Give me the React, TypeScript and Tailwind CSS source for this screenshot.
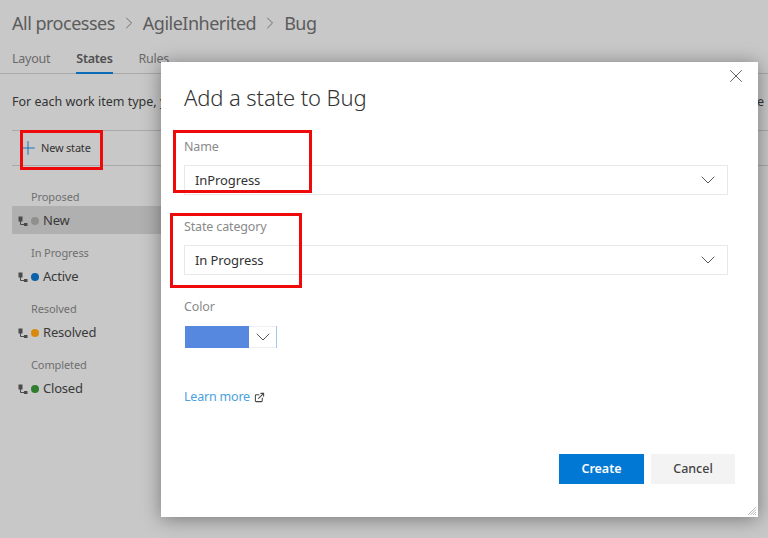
import React from 'react';
import { ChevronDown, ChevronRight, ExternalLink, Plus, X } from 'lucide-react';

const states = [
  { group: 'Proposed', name: 'New', dot: 'bg-[#8f8f8f]', selected: true },
  { group: 'In Progress', name: 'Active', dot: 'bg-[#0a62a8]', selected: false },
  { group: 'Resolved', name: 'Resolved', dot: 'bg-[#d98a0c]', selected: false },
  { group: 'Completed', name: 'Closed', dot: 'bg-[#2f7d2f]', selected: false },
];

const WorkflowIcon = () => (
  <svg width="10" height="10" viewBox="0 0 10 10" className="shrink-0 text-[#4a4a4a]">
    <rect x="0.5" y="0.5" width="4" height="5" fill="currentColor" />
    <rect x="6" y="7" width="3.5" height="3" fill="currentColor" />
    <path d="M2.5 5v3.5H6" fill="none" stroke="currentColor" strokeWidth="1" />
  </svg>
);

const SelectBox = ({ value }: { value: string }) => (
  <div className="flex h-[30px] w-[544px] items-center justify-between border border-[#e8e8e8] pl-[10px] pr-[7px] text-[13px] tracking-[-0.1px] text-[#333333]">
    <span className="pt-[2px]">{value}</span>
    <ChevronDown size={24} strokeWidth={1} className="text-[#555555]" />
  </div>
);

export default function App() {
  return (
    <div className="relative h-[538px] w-[768px] overflow-hidden bg-[#c8c8c8] font-['Noto_Sans',sans-serif] text-[#2f2f2f]">
      <div className="flex items-center gap-[4px] pl-3 pt-[9px] text-[18px] leading-[28px] tracking-[-0.5px] text-[#5c5c5c]">
        <span>All processes</span>
        <ChevronRight size={20} strokeWidth={1} />
        <span>AgileInherited</span>
        <ChevronRight size={20} strokeWidth={1} />
        <span>Bug</span>
      </div>

      <div className="mt-[10px] flex h-[27px] gap-[26px] border-b border-[#a9a9a9] pl-3 text-[12.5px] leading-[24px] tracking-[-0.25px] text-[#6a6a6a]">
        <span>Layout</span>
        <span className="-mb-px h-[27px] border-b-2 border-[#0a6cb8] font-semibold text-[#4f4f4f]">States</span>
        <span>Rules</span>
      </div>

      <div className="flex justify-between pl-3 pr-[4px] pt-[18px] text-[12.5px] leading-[20px] whitespace-nowrap text-[#333333]">
        <span>For each work item type, y</span>
        <span>e</span>
      </div>

      <div className="ml-3 mt-[18px] flex h-[36px] items-center gap-[2px] border-y border-[#a9a9a9] pl-[5px] text-[11px] tracking-[-0.2px] text-[#333333]">
        <Plus size={22} strokeWidth={1} className="text-[#0a6cb8]" />
        <span>New state</span>
      </div>

      <div className="pl-3 pt-[22px]">
        {states.map((s) => (
          <div key={s.name} className="mb-[10px] h-[46px]">
            <div className="mb-px pl-[19px] text-[11px] leading-[17px] tracking-[-0.1px] text-[#6f6f6f]">{s.group}</div>
            <div className={`flex h-7 w-[150px] items-center pl-[6px] pt-[1px] text-[13px] tracking-[-0.2px] text-[#3a3a3a] ${s.selected ? 'bg-[#b0b0b0]' : ''}`}>
              <WorkflowIcon />
              <span className={`ml-[3px] mr-[4px] h-2 w-2 rounded-full ${s.dot}`} />
              <span>{s.name}</span>
            </div>
          </div>
        ))}
      </div>

      <div className="absolute left-[161px] top-[62px] flex h-[455px] w-[597px] flex-col bg-white pl-[23px] shadow-[0_2px_18px_rgba(0,0,0,0.4)]">
        <X size={22} strokeWidth={1} className="absolute right-[11px] top-[3px] text-[#555555]" />
        <h1 className="pt-[18px] text-[22px] font-light leading-[34px] tracking-[-0.1px] text-[#333333]">Add a state to Bug</h1>

        <label className="mt-[23px] text-[12.5px] leading-[20px] tracking-[-0.15px] text-[#8a8a8a]">Name</label>
        <div className="mt-[8px]"><SelectBox value="InProgress" /></div>

        <label className="mt-[22px] text-[12.5px] leading-[20px] tracking-[-0.15px] text-[#8a8a8a]">State category</label>
        <div className="mt-[8px]"><SelectBox value="In Progress" /></div>

        <label className="mt-[22px] text-[12.5px] leading-[20px] tracking-[-0.15px] text-[#8a8a8a]">Color</label>
        <div className="ml-px mt-[9px] flex h-[22px] w-[92px] border-r border-[#a9c4f0]">
          <div className="w-[64px] bg-[#5788e0]" />
          <div className="flex flex-1 items-center justify-center border-y border-[#efefef]">
            <ChevronDown size={24} strokeWidth={1} className="text-[#555555]" />
          </div>
        </div>

        <div className="mt-[39px] flex items-center gap-[4px] text-[12.5px] leading-[20px] tracking-[-0.2px] text-[#4ba0e0]">
          <span>Learn more</span>
          <ExternalLink size={11} strokeWidth={2.25} className="text-[#444444]" />
        </div>

        <div className="absolute bottom-[33px] right-[23px] flex gap-[7px] text-[12.5px]">
          <button className="h-[30px] w-[85px] bg-[#0078d4] font-semibold text-white">Create</button>
          <button className="h-[30px] w-[84px] bg-[#f3f3f3] font-medium text-[#444444]">Cancel</button>
        </div>

        <svg width="10" height="10" viewBox="0 0 10 10" className="absolute bottom-px right-px text-[#9a9a9a]">
          <path d="M1 9 9 1M3.5 9 9 3.5M6 9l3-3M8 9l1-1" stroke="currentColor" strokeWidth="0.7" fill="none" />
        </svg>
      </div>

      <div className="absolute left-[20px] top-[130px] h-[40px] w-[83px] border-[3px] border-[#ee0a0a]" />
      <div className="absolute left-[173px] top-[130px] h-[63px] w-[139px] border-[3px] border-[#ee0a0a]" />
      <div className="absolute left-[170px] top-[213px] h-[75px] w-[132px] border-[3px] border-[#ee0a0a]" />
    </div>
  );
}
